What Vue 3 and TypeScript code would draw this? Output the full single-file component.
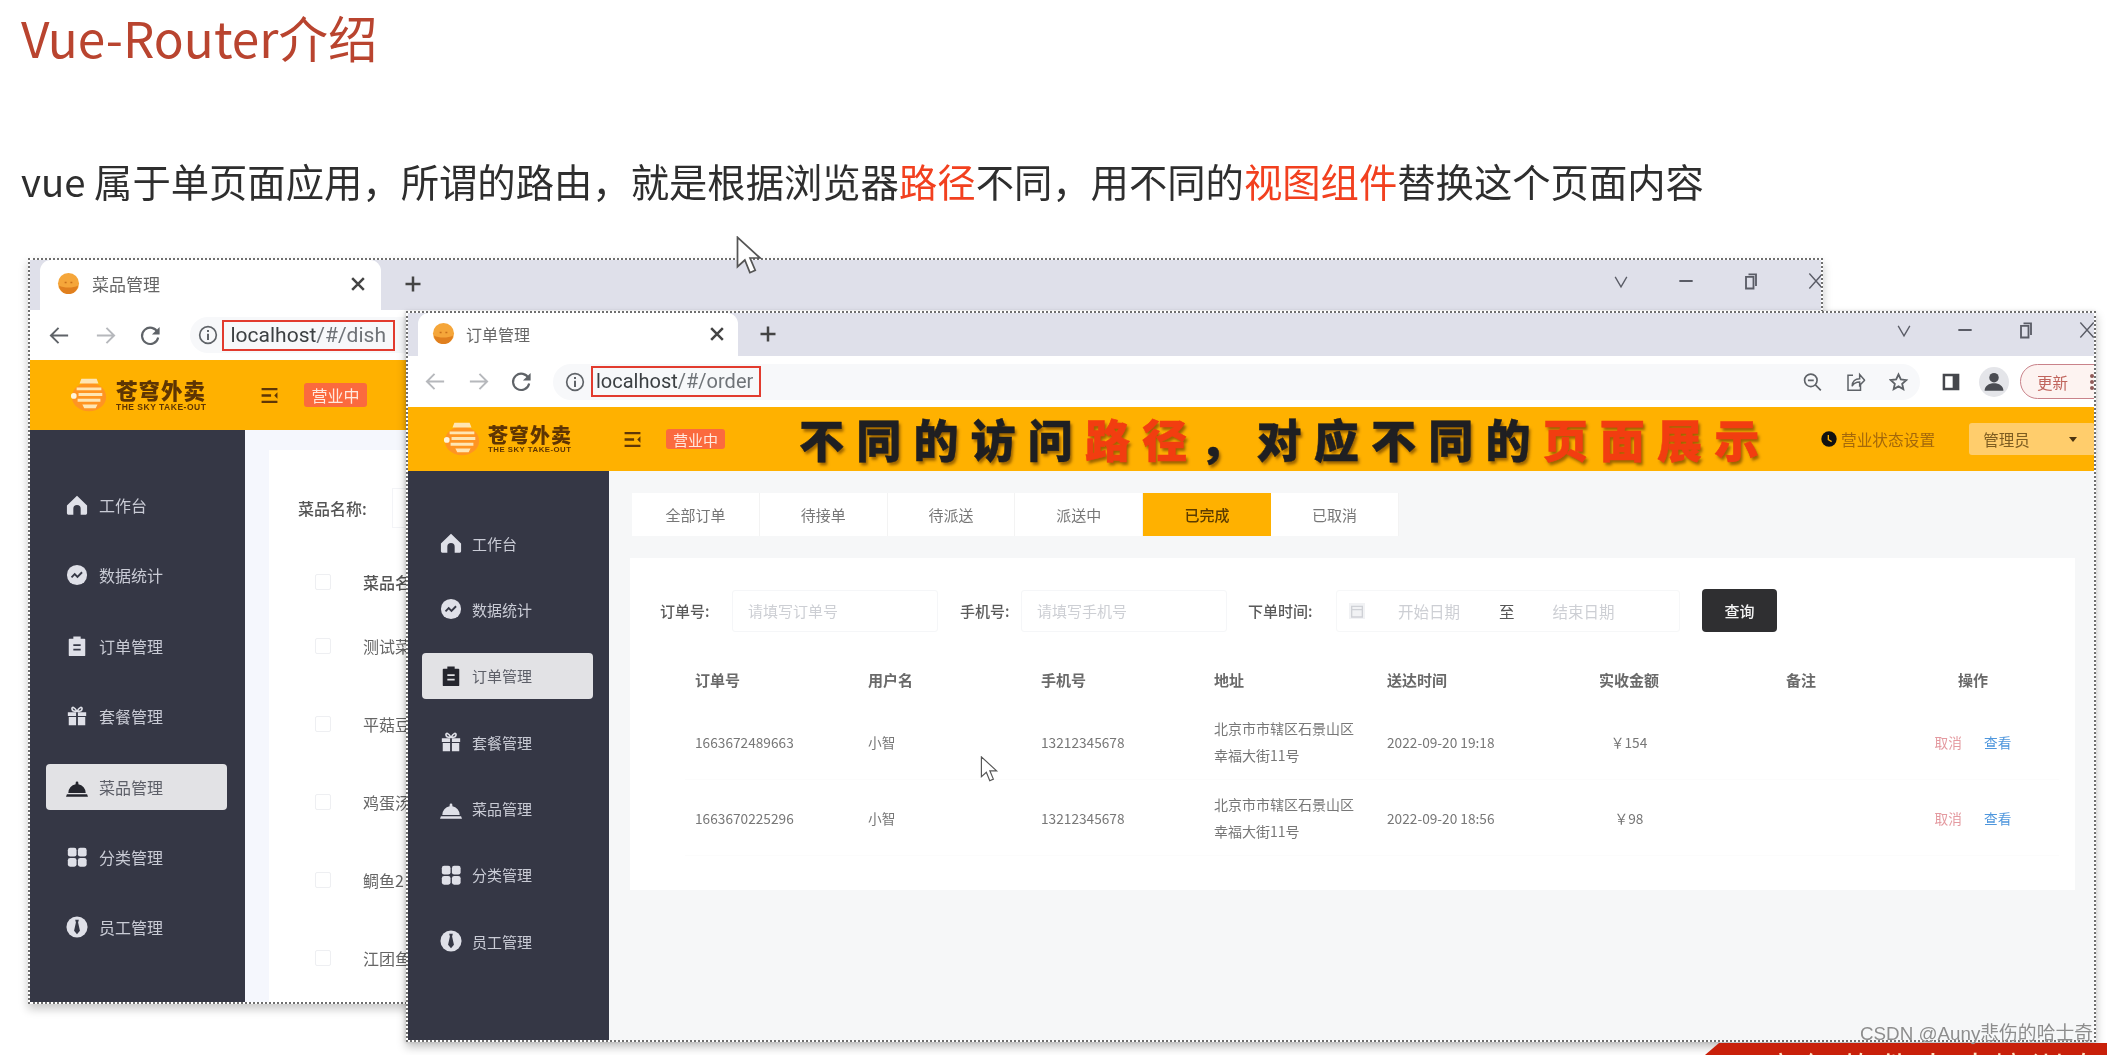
<script setup lang="ts">
interface NavItem { label: string; icon: string }
const nav: NavItem[] = [
  { label: '工作台', icon: 'home' },
  { label: '数据统计', icon: 'stats' },
  { label: '订单管理', icon: 'order' },
  { label: '套餐管理', icon: 'gift' },
  { label: '菜品管理', icon: 'dish' },
  { label: '分类管理', icon: 'cat' },
  { label: '员工管理', icon: 'staff' },
]
const dishRows = ['测试菜', '平菇豆', '鸡蛋汤', '鲷鱼2', '江团鱼']
const tabs = ['全部订单', '待接单', '待派送', '派送中', '已完成', '已取消']
const columns = ['订单号', '用户名', '手机号', '地址', '送达时间', '实收金额', '备注', '操作']
const orders = [
  { id: '1663672489663', user: '小智', phone: '13212345678', time: '2022-09-20 19:18', amount: '￥154' },
  { id: '1663670225296', user: '小智', phone: '13212345678', time: '2022-09-20 18:56', amount: '￥98' },
]
</script>

<template>
  <div class="page">
    <svg class="sprite" width="0" height="0" aria-hidden="true">
      <symbol id="i-home" viewBox="0 0 24 24"><path fill="currentColor" d="M12 2 23 12.5V21a1.5 1.5 0 0 1-1.500 1.500H16V16a4 4 0 0 0-8 0v6.500H2.500A1.500 1.500 0 0 1 1 21v-8.500Z" /></symbol>
      <symbol id="i-stats" viewBox="0 0 24 24"><circle cx="12" cy="12" r="11" fill="currentColor" /><path fill="none" stroke="var(--d)" stroke-width="2" d="M6 14.500 9.500 11l3 3 5-5" /></symbol>
      <symbol id="i-order" viewBox="0 0 24 24"><path fill="currentColor" d="M4 4h4V1.500h8V4h4a1 1 0 0 1 1 1v17a1 1 0 0 1-1 1H4a1 1 0 0 1-1-1V5a1 1 0 0 1 1-1Z" /><path fill="none" stroke="var(--d)" stroke-width="2" d="M8 11h8M8 16h8" /></symbol>
      <symbol id="i-gift" viewBox="0 0 24 24"><path fill="currentColor" d="M2 8h9v4H2Zm11 0h9v4h-9ZM3 13h8v9H3Zm10 0h8v9h-8Z" /><path fill="none" stroke="currentColor" stroke-width="1.800" d="M12 7C9 7 6.500 6 6.500 4S9 1.500 12 7Zm0 0c3 0 5.500-1 5.500-3S15 1.500 12 7Z" /></symbol>
      <symbol id="i-dish" viewBox="0 0 24 24"><path fill="currentColor" d="M2.500 18.500a9.500 9.500 0 0 1 8-9.400V7.500a1.500 1.500 0 1 1 3 0v1.600a9.500 9.500 0 0 1 8 9.400ZM1 20h22l1 2.500H0Z" /></symbol>
      <symbol id="i-cat" viewBox="0 0 24 24"><rect x="2" y="2" width="9.500" height="9.500" rx="2.500" fill="currentColor" /><rect x="13" y="2" width="9.500" height="9.500" rx="2.500" fill="currentColor" /><rect x="2" y="13" width="9.500" height="9.500" rx="2.500" fill="currentColor" /><rect x="13" y="13" width="9.500" height="9.500" rx="2.500" fill="currentColor" /></symbol>
      <symbol id="i-staff" viewBox="0 0 24 24"><circle cx="12" cy="12" r="11.500" fill="currentColor" /><path fill="var(--d)" d="M10 4h4l-.800 3 2 9L12 20l-3.200-4 2-9Z" /></symbol>
      <symbol id="i-back" viewBox="0 0 24 24"><path fill="none" stroke="currentColor" stroke-width="2" d="M21 12H4m7-8-8 8 8 8" /></symbol>
      <symbol id="i-fwd" viewBox="0 0 24 24"><path fill="none" stroke="currentColor" stroke-width="2" d="M3 12h17m-7-8 8 8-8 8" /></symbol>
      <symbol id="i-reload" viewBox="0 0 24 24"><path fill="none" stroke="currentColor" stroke-width="2.200" d="M19.500 9A8.500 8.500 0 1 0 20 14" /><path fill="currentColor" d="M21.500 3v8h-8Z" /></symbol>
      <symbol id="i-info" viewBox="0 0 24 24"><circle cx="12" cy="12" r="10" fill="none" stroke="currentColor" stroke-width="2" /><path fill="none" stroke="currentColor" stroke-width="2.400" d="M12 10.500V18M12 6v2.400" /></symbol>
      <symbol id="i-x" viewBox="0 0 24 24"><path fill="none" stroke="currentColor" stroke-width="3" d="m5 5 14 14M19 5 5 19" /></symbol>
      <symbol id="i-plus" viewBox="0 0 24 24"><path fill="none" stroke="currentColor" stroke-width="3" d="M12 3v18M3 12h18" /></symbol>
      <symbol id="i-chev" viewBox="0 0 24 24"><path fill="none" stroke="currentColor" stroke-width="1.600" d="m5 7 7 12 7-12" /></symbol>
      <symbol id="i-min" viewBox="0 0 24 24"><path fill="none" stroke="currentColor" stroke-width="2.400" d="M4 12h16" /></symbol>
      <symbol id="i-restore" viewBox="0 0 24 24"><path fill="none" stroke="currentColor" stroke-width="2.200" d="M6 7h9v14H6Zm3-3h9v14" /></symbol>
      <symbol id="i-close" viewBox="0 0 24 24"><path fill="none" stroke="currentColor" stroke-width="1.600" d="m4 3 16 18M20 3 4 21" /></symbol>
      <symbol id="i-zoom" viewBox="0 0 24 24"><circle cx="10" cy="10" r="7.500" fill="none" stroke="currentColor" stroke-width="2" /><path fill="none" stroke="currentColor" stroke-width="2" d="m15.500 15.500 6.500 6.500M6.500 10h7" /></symbol>
      <symbol id="i-share" viewBox="0 0 24 24"><path fill="none" stroke="currentColor" stroke-width="1.800" d="M9 4H3v18h15v-7M8 17c0-6 4-9 9-9V3l6 7-6 6v-4c-4 0-7 1-9 5Z" /></symbol>
      <symbol id="i-star" viewBox="0 0 24 24"><path fill="none" stroke="currentColor" stroke-width="2.200" d="m12 3 2.800 6 6.500.7-4.900 4.400 1.400 6.400L12 17.200 6.200 20.500l1.400-6.400-4.900-4.400 6.500-.7Z" /></symbol>
      <symbol id="i-panel" viewBox="0 0 24 24"><path fill="currentColor" fill-rule="evenodd" d="M2 2h20v20H2Zm3 3v14h9V5Z" /></symbol>
      <symbol id="i-user" viewBox="0 0 24 24"><circle cx="12" cy="12" r="12" fill="#e4e5e9" /><circle cx="12" cy="8.500" r="3.800" fill="#4a4c52" /><path fill="#4a4c52" d="M4.500 19c0-4 3.500-6 7.500-6s7.500 2 7.500 6Z" /></symbol>
      <symbol id="i-burger" viewBox="0 0 24 24"><path fill="none" stroke="currentColor" stroke-width="3" d="M2 4h20M2 20h20M2 12h12" /><path fill="currentColor" d="m22 8-4 4 4 4Z" /></symbol>
      <symbol id="i-clock" viewBox="0 0 24 24"><circle cx="12" cy="12" r="11.500" fill="#111" /><path fill="none" stroke="#ffb000" stroke-width="2" d="M11 6v7l5 3" /></symbol>
      <symbol id="i-cal" viewBox="0 0 24 24"><path fill="none" stroke="currentColor" stroke-width="2" d="M4 5h16v16H4ZM4 10h16" /></symbol>
      <symbol id="i-logo" viewBox="0 0 40 40">
        <ellipse cx="20" cy="22" rx="18" ry="15" fill="#ff9422" />
        <path fill="#ffe6b4" d="M12 3h16l2 5H10ZM7 12h26v3H7Zm2 6h25v3H9Zm-1 6h24v3H8Zm5 6h16l-2 4H15Z" />
        <circle cx="4" cy="21" r="3" fill="#fff5dc" />
      </symbol>
      <symbol id="i-fav" viewBox="0 0 24 24">
        <circle cx="12" cy="12" r="11" fill="#f5a63a" />
        <path fill="#e07f1e" d="M2 14c5 3 15 3 20 0-1 6-5 9-10 9S3 20 2 14Z" />
        <path fill="none" stroke="#c96f1a" stroke-width="1.500" d="M8 11h2m4 0h2" />
      </symbol>
      <symbol id="i-cursor" viewBox="0 0 20 30"><path fill="#fff" stroke="#555" stroke-width="1.300" d="M1 1v22l5.500-5 3.800 9.500 4-1.800-3.900-9.200h7.500Z" /></symbol>
    </svg>

    <h1 class="title">Vue-Router介绍</h1>
    <p class="lead">vue 属于单页面应用，所谓的路由，就是根据浏览器<em>路径</em>不同，用不同的<em>视图组件</em>替换这个页面内容</p>

    <!-- Rear browser window: dish management -->
    <section class="win win-back">
      <div class="strip">
        <div class="tab">
          <svg class="fav"><use href="#i-fav" /></svg>
          <span class="tab-title">菜品管理</span>
          <svg class="tab-x"><use href="#i-x" /></svg>
        </div>
        <svg class="tab-plus"><use href="#i-plus" /></svg>
        <div class="ctrls">
          <span class="ctrl"><svg><use href="#i-chev" /></svg></span>
          <span class="ctrl"><svg><use href="#i-min" /></svg></span>
          <span class="ctrl"><svg><use href="#i-restore" /></svg></span>
          <span class="ctrl"><svg><use href="#i-close" /></svg></span>
        </div>
      </div>
      <div class="toolbar">
        <span class="nbtn"><svg><use href="#i-back" /></svg></span>
        <span class="nbtn dim"><svg><use href="#i-fwd" /></svg></span>
        <span class="nbtn"><svg><use href="#i-reload" /></svg></span>
        <div class="omni">
          <svg class="info"><use href="#i-info" /></svg>
          <span class="url">localhost<i>/#/dish</i></span>
        </div>
      </div>
      <header class="head">
        <svg class="logo"><use href="#i-logo" /></svg>
        <div class="brand"><b>苍穹外卖</b><small>THE SKY TAKE-OUT</small></div>
        <svg class="burger"><use href="#i-burger" /></svg>
        <span class="badge">营业中</span>
      </header>
      <div class="body">
        <nav class="side">
          <a v-for="n in nav" :key="n.label" class="item" :class="{ on: n.label === '菜品管理' }">
            <svg class="ic"><use :href="'#i-' + n.icon" /></svg>{{ n.label }}
          </a>
        </nav>
        <main class="dish-main">
          <div class="dish-card">
            <div class="dish-filter"><b>菜品名称:</b><span class="dish-input"></span></div>
            <div class="dish-row dish-top"><span class="chk"></span><b>菜品名称</b></div>
            <div v-for="r in dishRows" :key="r" class="dish-row"><span class="chk"></span>{{ r }}</div>
          </div>
        </main>
      </div>
    </section>

    <!-- Front browser window: order management -->
    <section class="win win-front">
      <div class="strip">
        <div class="tab">
          <svg class="fav"><use href="#i-fav" /></svg>
          <span class="tab-title">订单管理</span>
          <svg class="tab-x"><use href="#i-x" /></svg>
        </div>
        <svg class="tab-plus"><use href="#i-plus" /></svg>
        <div class="ctrls">
          <span class="ctrl"><svg><use href="#i-chev" /></svg></span>
          <span class="ctrl"><svg><use href="#i-min" /></svg></span>
          <span class="ctrl"><svg><use href="#i-restore" /></svg></span>
          <span class="ctrl"><svg><use href="#i-close" /></svg></span>
        </div>
      </div>
      <div class="toolbar">
        <span class="nbtn dim"><svg><use href="#i-back" /></svg></span>
        <span class="nbtn dim"><svg><use href="#i-fwd" /></svg></span>
        <span class="nbtn"><svg><use href="#i-reload" /></svg></span>
        <div class="omni">
          <svg class="info"><use href="#i-info" /></svg>
          <span class="url">localhost<i>/#/order</i></span>
          <span class="omni-tools">
            <svg><use href="#i-zoom" /></svg>
            <svg><use href="#i-share" /></svg>
            <svg><use href="#i-star" /></svg>
          </span>
        </div>
        <svg class="panel"><use href="#i-panel" /></svg>
        <svg class="avatar"><use href="#i-user" /></svg>
        <div class="update"><span>更新</span><span class="dots"></span></div>
      </div>
      <header class="head">
        <svg class="logo"><use href="#i-logo" /></svg>
        <div class="brand"><b>苍穹外卖</b><small>THE SKY TAKE-OUT</small></div>
        <svg class="burger"><use href="#i-burger" /></svg>
        <span class="badge">营业中</span>
        <div class="banner">不同的访问<em>路径</em>，对应不同的<em>页面展示</em></div>
        <svg class="clock"><use href="#i-clock" /></svg>
        <span class="biz">营业状态设置</span>
        <div class="admin"><span>管理员</span><i></i></div>
      </header>
      <div class="body">
        <nav class="side">
          <a v-for="n in nav" :key="n.label" class="item" :class="{ on: n.label === '订单管理' }">
            <svg class="ic"><use :href="'#i-' + n.icon" /></svg>{{ n.label }}
          </a>
        </nav>
        <main class="order-main">
          <div class="otabs">
            <span v-for="t in tabs" :key="t" class="otab" :class="{ on: t === '已完成' }">{{ t }}</span>
          </div>
          <div class="card">
            <div class="filters">
              <label class="f f1"><span>订单号:</span><input class="inp" placeholder="请填写订单号" /></label>
              <label class="f f2"><span>手机号:</span><input class="inp" placeholder="请填写手机号" /></label>
              <div class="f f3">
                <span>下单时间:</span>
                <div class="range">
                  <svg><use href="#i-cal" /></svg>
                  <span class="ph start">开始日期</span>
                  <span class="to">至</span>
                  <span class="ph">结束日期</span>
                </div>
              </div>
              <button class="search">查询</button>
            </div>
            <div class="grid ghead">
              <span v-for="c in columns" :key="c">{{ c }}</span>
            </div>
            <div v-for="o in orders" :key="o.id" class="grid grow">
              <span>{{ o.id }}</span>
              <span>{{ o.user }}</span>
              <span>{{ o.phone }}</span>
              <span class="addr">北京市市辖区石景山区<br />幸福大街11号</span>
              <span>{{ o.time }}</span>
              <span>{{ o.amount }}</span>
              <span></span>
              <span class="ops"><a class="red">取消</a><a class="blue">查看</a></span>
            </div>
          </div>
        </main>
      </div>
    </section>

    <svg class="cursor big"><use href="#i-cursor" /></svg>
    <svg class="cursor small"><use href="#i-cursor" /></svg>
    <div class="ribbon"><span>高级软件人才培训专家</span></div>
    <div class="mark">CSDN @Auny悲伤的哈士奇</div>
  </div>
</template>

<style>
html, body { margin: 0; background: #fff; }
</style>

<style scoped>
.page {
  position: relative;
  width: 2107px;
  height: 1055px;
  overflow: hidden;
  background: #fff;
  font-family: "Noto Sans CJK SC", "Noto Sans", sans-serif;
  color: #333;
  filter: blur(0.6px);
}
.sprite { position: absolute; }
em { font-style: normal; }
i { font-style: normal; }

.title {
  margin: 5px 0 0 21px;
  font-size: 49.500px;
  line-height: 64px;
  font-weight: 400;
  color: #b9442f;
}
.lead {
  margin: 87px 0 0 21px;
  font-size: 38.350px;
  line-height: 50px;
  color: #2e2e2e;
  white-space: nowrap;
}
.lead em { color: #f2401f; }

/* windows on the slide */
.win {
  position: absolute;
  box-sizing: border-box;
  border: 2px dotted #6f6f6f;
  overflow: hidden;
  background: #fff;
  box-shadow: 0 5px 9px rgba(0, 0, 0, 0.22);
  display: flex;
  flex-direction: column;
}
.win-back { left: 28px; top: 258px; width: 1795px; height: 746px; }
.win-front { left: 406px; top: 311px; width: 1690px; height: 731px; box-shadow: 0 5px 9px rgba(0, 0, 0, 0.25), -1px 0 3px rgba(0, 0, 0, 0.12); }

/* tab strip */
.strip { display: flex; align-items: flex-end; background: #dfe0ea; flex: none; }
.win-back .strip { height: 50px; }
.win-front .strip { height: 43px; }
.tab {
  display: flex;
  align-items: center;
  background: #fff;
  border-radius: 11px 11px 0 0;
  color: #666;
  box-sizing: border-box;
  height: 100%;
  margin-left: 10px;
}
.win-back .tab { width: 341px; padding: 0 13px 3px 17px; gap: 12px; font-size: 17px; }
.win-front .tab { width: 320px; padding: 0 11px 2px 14px; gap: 11px; font-size: 16px; }
.fav { width: 23px; height: 23px; flex: none; }
.tab-x { width: 20px; height: 20px; margin-left: auto; color: #444; }
.tab-plus { width: 20px; height: 20px; align-self: center; color: #444; margin-top: -2px; }
.win-back .tab-plus { margin-left: 22px; }
.win-front .tab-plus { margin-left: 20px; }
.ctrls { display: flex; margin-left: auto; align-self: center; color: #5a5c66; margin-top: -9px; }
.win-back .ctrls { margin-right: -27px; }
.win-front .ctrls { margin-right: -23px; }
.ctrl { display: flex; justify-content: center; }
.win-back .ctrl { width: 65px; }
.win-front .ctrl { width: 61px; }
.ctrl svg { width: 20px; height: 20px; }

/* toolbar */
.toolbar { display: flex; align-items: center; flex: none; background: #fff; overflow: hidden; }
.win-back .toolbar { height: 50px; padding-left: 7px; }
.win-front .toolbar { height: 51px; padding-left: 6px; }
.nbtn { display: flex; justify-content: center; flex: none; color: #5f6368; }
.nbtn.dim { color: #b6b8bc; }
.nbtn svg { width: 23px; height: 23px; }
.win-back .nbtn { width: 45.500px; }
.win-front .nbtn { width: 43px; }
.omni {
  display: flex;
  align-items: center;
  height: 36px;
  border-radius: 18px;
  background: #f7f8fa;
  flex: none;
}
.win-back .omni { margin-left: 16px; padding-left: 8px; width: 1400px; }
.win-front .omni { margin-left: 10px; padding-left: 12px; width: 1367px; box-sizing: border-box; }
.info { width: 20px; height: 20px; color: #5f6368; flex: none; }
.url {
  box-sizing: border-box;
  height: 31px;
  line-height: 27px;
  border: 2px solid #e23b2e;
  font-family: Roboto, "Noto Sans", sans-serif;
  color: #3c4043;
  white-space: nowrap;
}
.url i { color: #6f7378; }
.win-back .url { margin-left: 4px; width: 173px; padding-left: 7px; font-size: 21px; }
.win-front .url { margin-left: 6px; width: 170px; padding-left: 3px; font-size: 20px; }
.omni-tools { display: flex; margin-left: auto; color: #5f6368; }
.omni-tools svg { width: 20px; height: 20px; padding: 0 11.500px; }
.panel { width: 20px; height: 20px; margin-left: 21px; color: #45474c; flex: none; }
.avatar { width: 30px; height: 30px; margin-left: 18px; flex: none; }
.update {
  display: flex;
  align-items: center;
  box-sizing: border-box;
  flex: none;
  height: 35px;
  width: 100px;
  margin-left: 11px;
  padding-left: 16px;
  border: 1.500px solid #c9828a;
  border-radius: 18px;
  background: #fdf3f1;
  color: #c0645c;
  font-size: 15.500px;
}
.dots {
  width: 4px;
  height: 4px;
  margin-left: 22px;
  border-radius: 50%;
  background: #8f5a58;
  box-shadow: 0 -6px 0 #8f5a58, 0 6px 0 #8f5a58;
}

/* app header */
.head { display: flex; align-items: center; background: #ffb100; flex: none; }
.win-back .head { height: 70px; padding-left: 40px; }
.win-front .head { height: 64px; padding-left: 35px; }
.logo { width: 38px; height: 40px; flex: none; }
.brand { display: flex; flex-direction: column; color: #5e3503; white-space: nowrap; flex: none; }
.brand b { letter-spacing: 1px; line-height: 1.150; font-weight: 900; }
.brand small { font-family: "Liberation Sans", sans-serif; font-weight: 700; letter-spacing: 0.500px; line-height: 1.100; }
.win-back .brand { margin-left: 8px; width: 90px; }
.win-back .brand b { font-size: 21.500px; }
.win-back .brand small { font-size: 8.500px; }
.win-front .brand { margin-left: 7px; width: 83px; }
.win-front .brand b { font-size: 20px; }
.win-front .brand small { font-size: 7.800px; }
.burger { width: 19px; height: 19px; color: #5f3706; flex: none; }
.win-back .burger { margin-left: 54px; }
.win-front .burger { margin-left: 52px; }
.badge {
  flex: none;
  display: flex;
  align-items: center;
  justify-content: center;
  background: #fb6a3e;
  border-radius: 3px;
  color: #ffe9df;
}
.win-back .badge { margin-left: 25px; width: 63px; height: 24px; font-size: 16px; }
.win-front .badge { margin-left: 24px; width: 59px; height: 20px; font-size: 15px; }
.banner {
  flex: none;
  width: 970px;
  margin-left: 74px;
  font-size: 45px;
  line-height: 60px;
  font-weight: 900;
  letter-spacing: 12.200px;
  white-space: nowrap;
  color: #1f1f22;
  -webkit-text-stroke: 0.500px currentColor;
  text-shadow: 2px 3px 3px rgba(90, 50, 0, 0.6);
}
.banner em { color: #f23d10; }
.clock { width: 16px; height: 16px; margin-left: 52px; flex: none; }
.biz { margin-left: 4px; font-size: 15.700px; color: #a4680a; white-space: nowrap; flex: none; }
.admin {
  display: flex;
  align-items: center;
  flex: none;
  box-sizing: border-box;
  width: 126px;
  height: 32px;
  margin-left: 34px;
  padding: 0 10px 0 14px;
  background: #ffcd6c;
  border-radius: 3px;
  font-size: 15.500px;
  color: #7d5c20;
}
.admin i {
  margin-left: auto;
  border: 4px solid transparent;
  border-top: 5px solid #4b3410;
  border-bottom: 0;
  margin-right: 8px;
}

/* body + sidebar */
.body { display: flex; flex: 1; min-height: 0; }
.side { display: flex; flex-direction: column; flex: none; background: #353745; box-sizing: border-box; }
.win-back .side { width: 215px; padding: 52px 18px 0 16px; gap: 24.400px; }
.win-front .side { width: 201px; padding: 49px 16px 0 14px; gap: 20.400px; }
.item {
  --d: #353745;
  display: flex;
  align-items: center;
  height: 46px;
  flex: none;
  border-radius: 4px;
  color: #c9cbd5;
  white-space: nowrap;
}
.win-back .item { padding-left: 20px; gap: 11px; font-size: 16px; }
.win-front .item { padding-left: 18px; gap: 10px; font-size: 15px; }
.ic { width: 22px; height: 22px; flex: none; color: #dfe0e8; }
.item.on { --d: #e2e2e5; background: #e2e2e5; color: #5d5f68; }
.item.on .ic { color: #25262e; }

/* rear window content */
.dish-main { flex: 1; background: #f5f7fd; padding: 20px 0 0 24px; min-width: 0; }
.dish-card { background: #fff; height: 100%; box-sizing: border-box; padding-left: 29px; font-size: 16px; color: #666; }
.dish-filter { display: flex; align-items: center; height: 100px; box-sizing: border-box; padding-top: 16px; }
.dish-filter b { font-weight: 500; color: #555; }
.dish-input { width: 400px; height: 38px; margin-left: 25px; border: 1px solid #f3f4f7; }
.dish-row { display: flex; align-items: center; height: 78px; white-space: nowrap; }
.dish-row b { font-weight: 500; color: #555; }
.dish-top { height: 64px; }
.dish-top + .dish-row { height: 64px; margin-bottom: 7px; }
.chk { width: 14px; height: 14px; margin: 0 32px 0 17px; border: 1px solid #eeeff2; flex: none; border-radius: 2px; }

/* front window content */
.order-main { flex: 1; min-width: 0; background: #f6f7f8; padding: 22px 0 0 23px; }
.otabs { display: flex; height: 43px; }
.otab {
  width: 127.800px;
  display: flex;
  align-items: center;
  justify-content: center;
  background: #fff;
  font-size: 15px;
  color: #777;
  border-right: 1px solid #f3f3f3;
  box-sizing: border-box;
}
.otab.on { background: #ffb100; color: #5b3b00; font-weight: 500; border-right: 0; }
.card { width: 1445px; height: 332px; margin: 22px 0 0 -2px; background: #fff; box-sizing: border-box; padding: 31px 0 0 30px; }
.filters { display: flex; align-items: center; height: 43px; font-size: 15px; font-weight: 500; color: #5a5a5a; }
.f { display: flex; align-items: center; white-space: nowrap; }
.f > span { flex: none; }
.f1 > span { width: 72px; }
.f2 > span { width: 61px; }
.f3 > span { width: 88px; }
.f1, .f2 { margin-right: 22px; }
.f2 { margin-right: 21px; }
.f3 { margin-right: 22px; }
.inp {
  width: 206px;
  height: 42px;
  box-sizing: border-box;
  padding: 0 15px;
  border: 1px solid #f5f6f8;
  border-radius: 3px;
  outline: none;
  font: inherit;
  font-size: 15px;
  font-weight: 400;
  background: #fff;
}
.inp::placeholder { color: #cdcfd4; }
.range {
  display: flex;
  align-items: center;
  box-sizing: border-box;
  width: 344px;
  height: 42px;
  padding-left: 12px;
  border: 1px solid #f6f7f8;
  border-radius: 3px;
  color: #cdcfd4;
  font-size: 15.500px;
  font-weight: 400;
}
.range svg { width: 16px; height: 16px; color: #cfd1d6; background: #f1f2f4; }
.range .ph { flex: none; }
.range .start { margin-left: 33px; }
.range .to { margin: 0 38px 0 39px; color: #555; }
.search {
  width: 75px;
  height: 43px;
  padding: 0;
  border: 0;
  border-radius: 4px;
  background: #2f2f31;
  color: #f4f4f4;
  font: inherit;
  font-size: 15px;
}
.grid {
  display: grid;
  grid-template-columns: 173px 173px 173px 173px 166px 172px 172px 172px;
  margin-left: 25px;
  align-items: center;
}
.grid > span { padding-left: 10px; }
.grid > span:nth-child(n + 6) { padding-left: 0; text-align: center; }
.ghead { height: 49px; margin-top: 23px; font-size: 15px; font-weight: 700; color: #6a6a6a; }
.grow { height: 75px; font-size: 13.700px; color: #777; border-bottom: 1px solid #fcfcfc; width: 1374px; }
.addr { line-height: 27px; font-size: 14px; }
.ops { display: flex; justify-content: center; gap: 22px; }
.red { color: #e49aa0; }
.blue { color: #4f97dd; }

/* slide overlays */
.cursor { position: absolute; }
.big { left: 736px; top: 236px; width: 27px; height: 40px; }
.small { left: 980px; top: 756px; width: 19px; height: 27px; }
.ribbon {
  position: absolute;
  left: 1705px;
  top: 1043px;
  width: 402px;
  height: 12px;
  overflow: hidden;
  background: #c8200a;
  clip-path: polygon(14px 0, 100% 0, 100% 100%, 0 100%);
}
.ribbon span {
  position: absolute;
  left: 60px;
  top: 3px;
  font-size: 32px;
  line-height: 40px;
  letter-spacing: 6px;
  color: #ffe7c4;
  white-space: nowrap;
}
.mark {
  position: absolute;
  left: 1860px;
  top: 1021px;
  font-family: "Liberation Sans", "Noto Sans CJK SC", sans-serif;
  font-size: 18.800px;
  line-height: 26px;
  color: #8d8d8d;
  white-space: nowrap;
  text-shadow: 0 0 1px rgba(255, 255, 255, 0.6);
}
</style>
